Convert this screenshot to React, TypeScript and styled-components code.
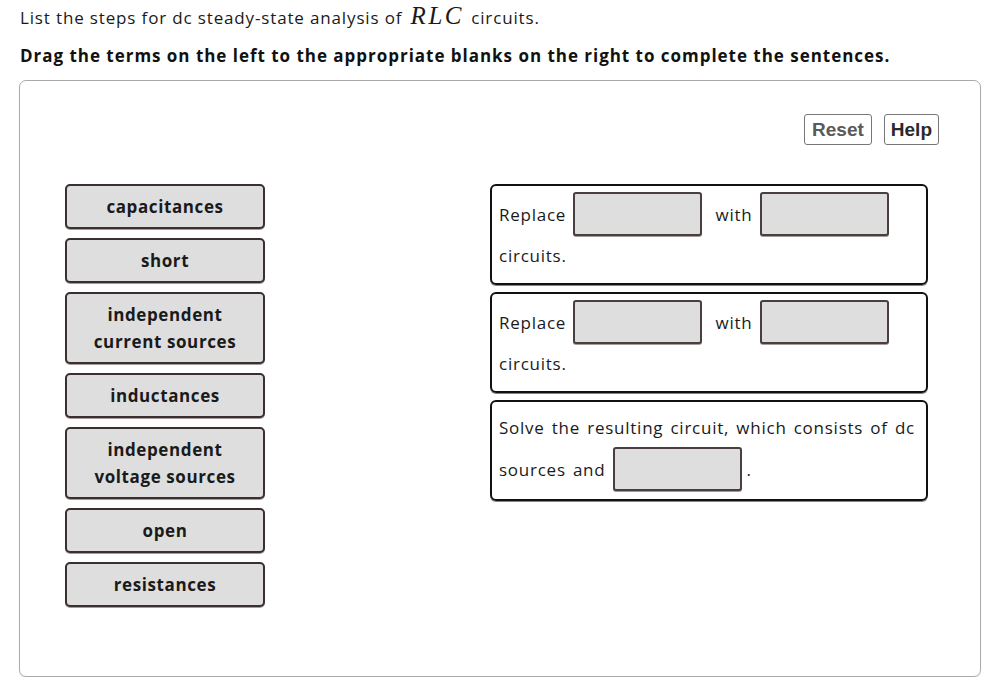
import React from "react";
import styled, { createGlobalStyle } from "styled-components";

const Global = createGlobalStyle`
  html, body { margin: 0; padding: 0; background: #fff; }
  body { font-family: "Open Sans", "Noto Sans", sans-serif; color: #111; }
`;

const Page = styled.div`
  padding: 4px 6px 0 19px;
  box-sizing: border-box;
  width: 987px;
`;

const Title = styled.p`
  margin: 0;
  padding-left: 1px;
  font-size: 17px;
  letter-spacing: 0.85px;
  line-height: 24px;
  color: #1a1a1a;
`;

const Math = styled.span`
  font-family: "Liberation Serif", serif;
  font-style: italic;
  font-size: 25px;
  letter-spacing: 2.5px;
  margin: 0 2px 0 3px;
`;

const Instructions = styled.p`
  margin: 14px 0 12px;
  padding-left: 1px;
  font-size: 17px;
  letter-spacing: 0.97px;
  line-height: 24px;
  font-weight: 700;
  color: #111;
`;

const Panel = styled.div`
  box-sizing: border-box;
  height: 597px;
  border: 1px solid #aaa;
  border-radius: 7px;
  padding: 33px 41px 0 45px;
  box-shadow: 0 1px 1px rgba(0, 0, 0, 0.12);
`;

const Toolbar = styled.div`
  display: flex;
  justify-content: flex-end;
  gap: 12px;
  height: 31px;
`;

const ToolButton = styled.button<{ $muted?: boolean }>`
  box-sizing: border-box;
  height: 31px;
  padding: 0 ${(p) => (p.$muted ? 7 : 6)}px;
  border: 1px solid #777;
  border-radius: 3px;
  background: #fff;
  font-family: "Liberation Sans", Arial, sans-serif;
  font-weight: 700;
  font-size: 19px;
  color: ${(p) => (p.$muted ? "#5a5a5a" : "#2a2a2a")};
`;

const Workspace = styled.div`
  display: flex;
  gap: 225px;
  margin-top: 39px;
`;

const TermColumn = styled.div`
  display: flex;
  flex-direction: column;
  gap: 9px;
  width: 200px;
`;

const Term = styled.div`
  box-sizing: border-box;
  border: 2px solid #3b3030;
  border-radius: 5px;
  background: #dedede;
  box-shadow: 0 1px 0 #a79c9c;
  padding: 7px 4px;
  text-align: center;
  font-weight: 700;
  font-size: 17px;
  letter-spacing: 0.6px;
  line-height: 27px;
  color: #1a1a1a;
`;

const SentenceColumn = styled.div`
  display: flex;
  flex-direction: column;
  gap: 7px;
  width: 438px;
`;

const Sentence = styled.div`
  box-sizing: border-box;
  border: 2px solid #111;
  border-radius: 6px;
  box-shadow: 0 1px 0 #8b8378;
  padding: 6px 7px 8px;
  font-size: 17px;
  letter-spacing: 0.75px;
  word-spacing: 2px;
  line-height: 39px;
  color: #1a1a1a;
`;

const Blank = styled.span`
  display: inline-block;
  box-sizing: border-box;
  width: 129px;
  height: 44px;
  margin: 0 5px 0 0;
  vertical-align: -15px;
  border: 2px solid #4a3f3f;
  border-radius: 3px;
  background: #dedede;
  box-shadow: 0 1px 0 #a79c9c;
`;

const Word = styled.span<{ $lead?: number }>`
  padding-left: ${(p) => p.$lead ?? 0}px;
`;

const terms = [
  ["capacitances"],
  ["short"],
  ["independent", "current sources"],
  ["inductances"],
  ["independent", "voltage sources"],
  ["open"],
  ["resistances"],
];

export default function App() {
  return (
    <>
      <Global />
      <Page>
        <Title>
          List the steps for dc steady-state analysis of <Math>RLC</Math> circuits.
        </Title>
        <Instructions>
          Drag the terms on the left to the appropriate blanks on the right to complete the sentences.
        </Instructions>
        <Panel>
          <Toolbar>
            <ToolButton $muted>Reset</ToolButton>
            <ToolButton>Help</ToolButton>
          </Toolbar>
          <Workspace>
            <TermColumn>
              {terms.map((lines, i) => (
                <Term key={i}>
                  {lines.map((l, j) => (
                    <div key={j}>{l}</div>
                  ))}
                </Term>
              ))}
            </TermColumn>
            <SentenceColumn>
              <Sentence>
                Replace <Blank /> <Word $lead={1}>with</Word> <Blank /> circuits.
              </Sentence>
              <Sentence>
                Replace <Blank /> <Word $lead={1}>with</Word> <Blank /> circuits.
              </Sentence>
              <Sentence>
                Solve the resulting circuit, which consists of dc sources and <Blank />.
              </Sentence>
            </SentenceColumn>
          </Workspace>
        </Panel>
      </Page>
    </>
  );
}
